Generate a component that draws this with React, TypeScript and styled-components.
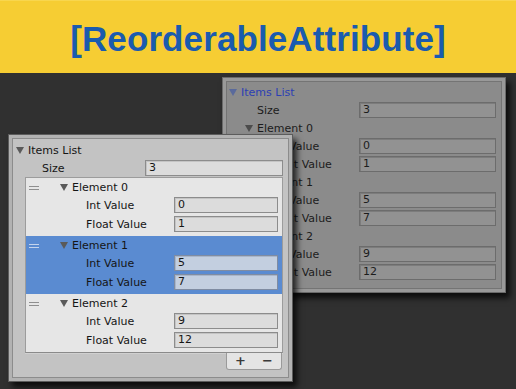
import styled, { createGlobalStyle } from 'styled-components';

const GlobalStyle = createGlobalStyle`
  html, body {
    margin: 0;
    padding: 0;
    background: #303030;
  }
  body {
    width: 516px;
    height: 389px;
    overflow: hidden;
    font-family: 'DejaVu Sans', Verdana, sans-serif;
  }
`;

type Item = { int: number; float: number };

const items: Item[] = [
  { int: 0, float: 1 },
  { int: 5, float: 7 },
  { int: 9, float: 12 },
];

const App = () => {
  return (
    <Page>
      <GlobalStyle />
      <Banner>
        <Title>[ReorderableAttribute]</Title>
      </Banner>
      <Desk>
        <Window $dim $left={222} $top={4} $width={284} $height={216}>
          <Inner $dim>
            <Row $indent={0}>
              <Arrow $dim $blue />
              <Label $blue>Items List</Label>
            </Row>
            <Row $indent={28}>
              <FixedLabel $width={102}>Size</FixedLabel>
              <Field $dim>3</Field>
            </Row>
            {items.map((item, i) => (
              <div key={i}>
                <Row $indent={16}>
                  <Arrow $dim />
                  <Label>Element {i}</Label>
                </Row>
                <Row $indent={42}>
                  <FixedLabel $width={88}>Int Value</FixedLabel>
                  <Field $dim>{item.int}</Field>
                </Row>
                <Row $indent={42}>
                  <FixedLabel $width={88}>Float Value</FixedLabel>
                  <Field $dim>{item.float}</Field>
                </Row>
              </div>
            ))}
          </Inner>
        </Window>

        <Window $left={8} $top={61} $width={285} $height={248}>
          <Inner>
            <Row $indent={1}>
              <Arrow />
              <Label>Items List</Label>
            </Row>
            <Row $indent={27}>
              <FixedLabel $width={103}>Size</FixedLabel>
              <Field>3</Field>
            </Row>
            <ListBox>
              {items.map((item, i) => (
                <Element key={i} $selected={i === 1}>
                  <Row $indent={0}>
                    <Handle $selected={i === 1} />
                    <Arrow />
                    <Label>Element {i}</Label>
                  </Row>
                  <Row $indent={60}>
                    <FixedLabel $width={88}>Int Value</FixedLabel>
                    <Field $selected={i === 1}>{item.int}</Field>
                  </Row>
                  <Row $indent={60} $gap>
                    <FixedLabel $width={88}>Float Value</FixedLabel>
                    <Field $selected={i === 1}>{item.float}</Field>
                  </Row>
                </Element>
              ))}
            </ListBox>
            <Footer>
              <FooterTab>
                <FooterButton>+</FooterButton>
                <FooterButton>−</FooterButton>
              </FooterTab>
            </Footer>
          </Inner>
        </Window>
      </Desk>
    </Page>
  );
};

const Page = styled.div`
  display: flex;
  flex-direction: column;
  width: 516px;
  height: 389px;
`;

const Banner = styled.div`
  display: flex;
  justify-content: center;
  align-items: center;
  height: 73px;
  background: #f6cd33;
  border-top: 1px solid #f8d64e;
  box-sizing: border-box;
`;

const Title = styled.h1`
  margin: 0;
  padding-top: 4px;
  font-family: 'Liberation Sans', Arial, sans-serif;
  font-weight: 700;
  font-size: 35px;
  letter-spacing: 0.1px;
  color: #1a5bae;
`;

const Desk = styled.div`
  position: relative;
  flex: 1;
  background: #303030;
`;

const Window = styled.div<{
  $dim?: boolean;
  $left: number;
  $top: number;
  $width: number;
  $height: number;
}>`
  position: absolute;
  left: ${(p) => p.$left}px;
  top: ${(p) => p.$top}px;
  width: ${(p) => p.$width}px;
  height: ${(p) => p.$height}px;
  box-sizing: border-box;
  display: flex;
  padding: 3px;
  border: 1px solid ${(p) => (p.$dim ? '#6a6a6a' : '#5c5c5c')};
  background: ${(p) => (p.$dim ? '#999999' : '#b2b2b2')};
  box-shadow: 4px 5px 6px rgba(0, 0, 0, 0.75);
`;

const Inner = styled.div<{ $dim?: boolean }>`
  flex: 1;
  display: flex;
  flex-direction: column;
  padding: ${(p) => (p.$dim ? '1px' : '2px')} 5px 0 2px;
  border: 1px solid ${(p) => (p.$dim ? '#747474' : '#8c8c8c')};
  background: ${(p) => (p.$dim ? '#8b8b8b' : '#c3c3c3')};
  color: ${(p) => (p.$dim ? '#1c1c1c' : '#151515')};
  font-size: 11px;
`;

const Row = styled.div<{ $indent: number; $gap?: boolean }>`
  display: flex;
  align-items: center;
  height: 18px;
  margin-top: ${(p) => (p.$gap ? 1 : 0)}px;
  padding-left: ${(p) => p.$indent}px;
`;

const Arrow = styled.span<{ $dim?: boolean; $blue?: boolean }>`
  width: 0;
  height: 0;
  margin-right: 4px;
  border-left: 4px solid transparent;
  border-right: 4px solid transparent;
  border-top: 7px solid
    ${(p) => (p.$blue ? '#5a6a9c' : p.$dim ? '#4c4c4c' : '#5a5a5a')};
`;

const Label = styled.span<{ $blue?: boolean }>`
  white-space: nowrap;
  color: ${(p) => (p.$blue ? '#2c3fb4' : 'inherit')};
`;

const FixedLabel = styled.span<{ $width: number }>`
  width: ${(p) => p.$width}px;
  flex-shrink: 0;
  white-space: nowrap;
`;

const Field = styled.div<{ $dim?: boolean; $selected?: boolean }>`
  flex: 1;
  height: 16px;
  box-sizing: border-box;
  padding: 0 3px;
  line-height: 14px;
  border: 1px solid
    ${(p) => (p.$dim ? '#6c6c6c' : p.$selected ? '#7f8ca2' : '#8c8c8c')};
  background: ${(p) => (p.$dim ? '#929292' : p.$selected ? '#c3cfe0' : '#dcdcdc')};
  box-shadow: inset 1px 1px 0
    ${(p) => (p.$dim ? '#7c7c7c' : p.$selected ? '#a9b6ca' : '#c4c4c4')};
`;

const ListBox = styled.div`
  margin-left: 10px;
  border: 1px solid #9c9c9c;
  border-bottom-color: #8a8a8a;
  background: #e6e6e6;
  box-shadow: 0 1px 0 #d0d0d0;
`;

const Element = styled.div<{ $selected?: boolean }>`
  padding: 0 4px 3px 0;
  background: ${(p) => (p.$selected ? '#5a8bd1' : 'transparent')};
`;

const Handle = styled.span<{ $selected?: boolean }>`
  width: 10px;
  height: 4px;
  margin: 2px 21px 0 3px;
  border-top: 1px solid ${(p) => (p.$selected ? '#c4d4ec' : '#8e8e8e')};
  border-bottom: 1px solid ${(p) => (p.$selected ? '#c4d4ec' : '#8e8e8e')};
  box-sizing: border-box;
  flex-shrink: 0;
`;

const Footer = styled.div`
  display: flex;
  justify-content: flex-end;
`;

const FooterTab = styled.div`
  display: flex;
  justify-content: space-around;
  align-items: center;
  width: 54px;
  height: 16px;
  margin-right: 1px;
  border: 1px solid #9a9a9a;
  border-top: none;
  border-radius: 0 0 3px 3px;
  background: #e4e4e4;
`;

const FooterButton = styled.span`
  font-family: 'DejaVu Sans', sans-serif;
  font-weight: 700;
  font-size: 13px;
  line-height: 16px;
  color: #3a3a3a;
`;

export default App;
